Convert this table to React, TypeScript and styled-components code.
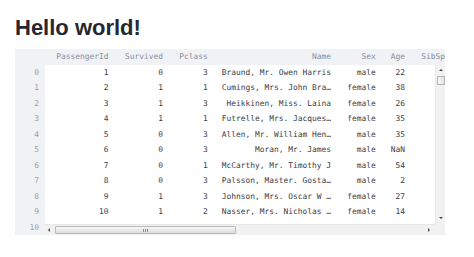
import styled, { createGlobalStyle, css } from "styled-components";

const GlobalStyle = createGlobalStyle`
  html, body {
    margin: 0;
    padding: 0;
    background: #ffffff;
  }
`;

const Page = styled.main`
  display: flex;
  flex-direction: column;
  padding: 15px 15px 0;
  font-family: "Liberation Sans", Arial, sans-serif;
`;

const Title = styled.h1`
  margin: 0 0 7.6px;
  font-size: 22px;
  line-height: 26.4px;
  font-weight: 700;
  color: #262730;
`;

const Frame = styled.div`
  position: relative;
  width: 430px;
  height: 186px;
  overflow: hidden;
  background: #ffffff;
  font-family: "DejaVu Sans Mono", "Liberation Mono", monospace;
  font-size: 7.9px;
`;

// index, PassengerId, Survived, Pclass, Name, Sex, Age, SibSp
const COLS = "30px 67.5px 54.5px 44.7px 123.3px 44.7px 29.3px 36px";

const Row = styled.div<{ $head?: boolean }>`
  display: grid;
  grid-template-columns: ${COLS};
  height: 15.5px;
  background: ${({ $head }) => ($head ? "#f0f2f6" : "transparent")};
`;

const Cell = styled.div<{ $head?: boolean; $pad?: number }>`
  display: flex;
  align-items: center;
  justify-content: flex-end;
  padding-right: ${({ $pad }) => ($pad ?? 4)}px;
  white-space: nowrap;
  overflow: hidden;
  color: ${({ $head }) => ($head ? "#8a8d99" : "#3a3b44")};
`;

const IndexCell = styled.div`
  display: flex;
  align-items: center;
  justify-content: flex-end;
  padding-right: 6px;
  background: #f0f2f6;
  color: #9a9ca6;
`;

const VTrack = styled.div`
  position: absolute;
  top: 15.5px;
  right: 0;
  bottom: 10.5px;
  width: 10px;
  background: #f1f1f1;
  border-left: 1px solid #e8e8e8;
  box-sizing: border-box;
`;

const HTrack = styled.div`
  position: absolute;
  left: 30px;
  right: 10px;
  bottom: 0;
  height: 11px;
  background: #f1f1f1;
  border-top: 1px solid #e8e8e8;
  box-sizing: border-box;
`;

const Corner = styled.div`
  position: absolute;
  right: 0;
  bottom: 0;
  width: 10px;
  height: 11px;
  background: #f1f1f1;
`;

type Dir = "up" | "down" | "left" | "right";

const arrowShape = {
  up: css`
    border-left: 2px solid transparent;
    border-right: 2px solid transparent;
    border-bottom: 2px solid #4a4a4a;
  `,
  down: css`
    border-left: 2px solid transparent;
    border-right: 2px solid transparent;
    border-top: 2px solid #4a4a4a;
  `,
  left: css`
    border-top: 2px solid transparent;
    border-bottom: 2px solid transparent;
    border-right: 2px solid #4a4a4a;
  `,
  right: css`
    border-top: 2px solid transparent;
    border-bottom: 2px solid transparent;
    border-left: 2px solid #4a4a4a;
  `,
};

const Arrow = styled.span<{ $dir: Dir; $x: string; $y: string }>`
  position: absolute;
  left: ${({ $x }) => $x};
  top: ${({ $y }) => $y};
  width: 0;
  height: 0;
  ${({ $dir }) => arrowShape[$dir]}
`;

const VThumb = styled.div`
  position: absolute;
  top: 11.5px;
  left: 0.5px;
  width: 8px;
  height: 9px;
  box-sizing: border-box;
  border: 1px solid #b4b4b4;
  background: linear-gradient(90deg, #f7f7f7, #e2e2e2);
`;

const HThumb = styled.div`
  position: absolute;
  left: 10px;
  width: 181px;
  top: 1px;
  height: 8px;
  box-sizing: border-box;
  border: 1px solid #b9b9b9;
  border-radius: 1px;
  background: linear-gradient(180deg, #f6f6f6, #dcdcdc);
  display: flex;
  align-items: center;
  justify-content: center;
  gap: 1px;
`;

const Grip = styled.span`
  width: 1px;
  height: 3px;
  background: #8d8d8d;
`;

const header = ["PassengerId", "Survived", "Pclass", "Name", "Sex", "Age", "SibSp"];

const rows: (string | number)[][] = [
  [1, 0, 3, "Braund, Mr. Owen Harris", "male", 22, 1],
  [2, 1, 1, "Cumings, Mrs. John Bra…", "female", 38, 1],
  [3, 1, 3, "Heikkinen, Miss. Laina", "female", 26, 0],
  [4, 1, 1, "Futrelle, Mrs. Jacques…", "female", 35, 1],
  [5, 0, 3, "Allen, Mr. William Hen…", "male", 35, 0],
  [6, 0, 3, "Moran, Mr. James", "male", "NaN", 0],
  [7, 0, 1, "McCarthy, Mr. Timothy J", "male", 54, 0],
  [8, 0, 3, "Palsson, Master. Gosta…", "male", 2, 3],
  [9, 1, 3, "Johnson, Mrs. Oscar W …", "female", 27, 0],
  [10, 1, 2, "Nasser, Mrs. Nicholas …", "female", 14, 1],
  [11, 1, 3, "Sandstrom, Miss. Margu…", "female", 4, 1],
];

export default function App() {
  return (
    <>
      <GlobalStyle />
      <Page>
        <Title>Hello world!</Title>
        <Frame>
          <Row $head>
            <Cell $head />
            {header.map((h, j) => (
              <Cell $head key={h} $pad={j === header.length - 1 ? 0 : 4}>
                {h}
              </Cell>
            ))}
          </Row>
          {rows.map((r, i) => (
            <Row key={i}>
              <IndexCell>{i}</IndexCell>
              {r.map((v, j) => (
                <Cell key={j} $pad={j === r.length - 1 ? 0 : 4}>
                  {v}
                </Cell>
              ))}
            </Row>
          ))}

          <VTrack>
            <Arrow $dir="up" $x="3px" $y="4.5px" />
            <VThumb />
            <Arrow $dir="down" $x="3px" $y="152.5px" />
          </VTrack>
          <HTrack>
            <Arrow $dir="left" $x="2.5px" $y="2.5px" />
            <HThumb>
              <Grip />
              <Grip />
              <Grip />
            </HThumb>
            <Arrow $dir="right" $x="383px" $y="2.5px" />
          </HTrack>
          <Corner />
        </Frame>
      </Page>
    </>
  );
}
